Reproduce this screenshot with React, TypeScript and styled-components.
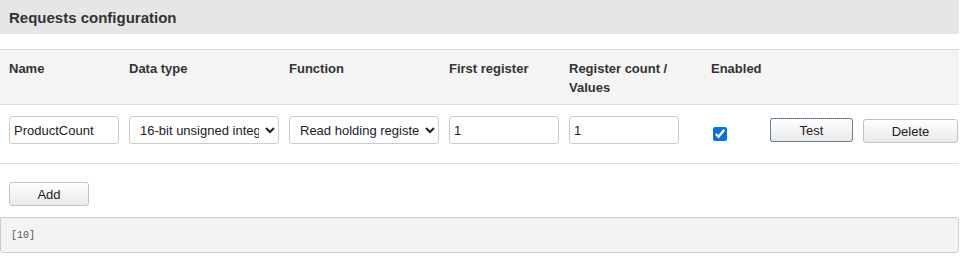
import styled, { createGlobalStyle } from "styled-components";

const GlobalStyle = createGlobalStyle`
    html, body {
        margin: 0;
        padding: 0;
        background: #ffffff;
        font-family: "Liberation Sans", Arial, sans-serif;
        font-size: 13px;
        color: #333333;
    }
`;

const columns = [
    { label: "Name", width: 120 },
    { label: "Data type", width: 160 },
    { label: "Function", width: 160 },
    { label: "First register", width: 120 },
    { label: "Register count / Values", width: 142 },
    { label: "Enabled", width: 59 },
    { label: "", width: 93 },
    { label: "", width: 105 },
];

const gridTemplate = columns.map((c) => `${c.width}px`).join(" ");

export default function App() {
    return (
        <>
            <GlobalStyle />
            <Panel>
                <Title>Requests configuration</Title>
                <Table>
                    <HeadRow>
                        {columns.map((c, i) => (
                            <HeadCell key={i}>{c.label === "Register count / Values" ? <>Register count /<br />Values</> : c.label}</HeadCell>
                        ))}
                    </HeadRow>
                    <BodyRow>
                        <Cell>
                            <TextInput $width={110} defaultValue="ProductCount" />
                        </Cell>
                        <Cell>
                            <Select defaultValue="u16">
                                <option value="u16">16-bit unsigned integer</option>
                            </Select>
                        </Cell>
                        <Cell>
                            <Select defaultValue="rhr">
                                <option value="rhr">Read holding registers</option>
                            </Select>
                        </Cell>
                        <Cell>
                            <TextInput $width={110} defaultValue="1" />
                        </Cell>
                        <Cell>
                            <TextInput $width={110} defaultValue="1" />
                        </Cell>
                        <Cell>
                            <Check type="checkbox" defaultChecked />
                        </Cell>
                        <Cell>
                            <Button $width={83} $top={2} $focused>Test</Button>
                        </Cell>
                        <Cell>
                            <Button $width={95} $top={3}>Delete</Button>
                        </Cell>
                    </BodyRow>
                </Table>
                <Actions>
                    <Button $width={80}>Add</Button>
                </Actions>
                <Output>[10]</Output>
            </Panel>
        </>
    );
}

const Panel = styled.div`
    width: 959px;
`;

const Title = styled.div`
    height: 34px;
    display: flex;
    align-items: center;
    padding-left: 9px;
    background: #e6e6e6;
    font-weight: bold;
    font-size: 15px;
    color: #333333;
`;

const Table = styled.div`
    margin-top: 15px;
    border-top: 1px solid #d6d6d6;
`;

const HeadRow = styled.div`
    display: grid;
    grid-template-columns: ${gridTemplate};
    height: 54px;
    background: #f4f4f4;
    border-bottom: 1px solid #dddddd;
`;

const HeadCell = styled.div`
    padding: 9px 0 0 9px;
    font-weight: bold;
    line-height: 19px;
    color: #333333;
`;

const BodyRow = styled.div`
    display: grid;
    grid-template-columns: ${gridTemplate};
    height: 58px;
    border-bottom: 1px solid #dddddd;
`;

const Cell = styled.div`
    padding: 11px 0 0 9px;
    display: flex;
    align-items: flex-start;
`;

const TextInput = styled.input<{ $width: number }>`
    box-sizing: border-box;
    width: ${({ $width }) => $width}px;
    height: 28px;
    padding: 0 4px;
    border: 1px solid #cccccc;
    border-radius: 3px;
    font-family: "Liberation Sans", Arial, sans-serif;
    font-size: 13px;
    color: #222222;
    background: #ffffff;
    outline: none;
`;

const Select = styled.select`
    box-sizing: border-box;
    width: 150px;
    height: 28px;
    padding: 0 3px 0 6px;
    border: 1px solid #cccccc;
    border-radius: 3px;
    font-family: "Liberation Sans", Arial, sans-serif;
    font-size: 13px;
    color: #222222;
    background: #ffffff;
`;

const Check = styled.input`
    width: 14px;
    height: 14px;
    margin: 11px 0 0 2px;
    accent-color: #0b6fe6;
`;

const Button = styled.button<{ $width: number; $focused?: boolean; $top?: number }>`
    box-sizing: border-box;
    width: ${({ $width }) => $width}px;
    height: 24px;
    margin-top: ${({ $top }) => $top ?? 0}px;
    border: 1px solid #c2c2c2;
    border-radius: 3px;
    background: linear-gradient(#ffffff, #e9e9e9);
    font-family: "Liberation Sans", Arial, sans-serif;
    font-size: 13px;
    color: #222222;
    cursor: pointer;
    ${({ $focused }) =>
        $focused &&
        `
        border: 1px solid #7aa7d9;
        outline: 1px dotted #5a5a5a;
        outline-offset: -1px;
    `}
`;

const Actions = styled.div`
    padding: 18px 0 11px 9px;
    height: 24px;
`;

const Output = styled.div`
    box-sizing: border-box;
    height: 36px;
    display: flex;
    align-items: center;
    padding-left: 10px;
    border: 1px solid #cccccc;
    border-radius: 0 3px 3px 3px;
    background: #f3f3f3;
    font-family: "Liberation Mono", "Courier New", monospace;
    font-size: 10px;
    color: #555555;
`;
